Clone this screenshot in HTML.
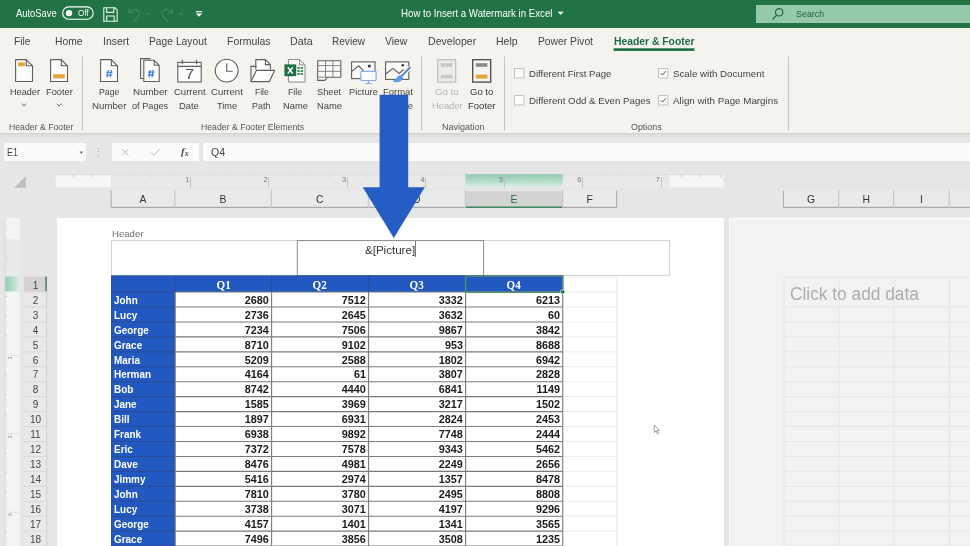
<!DOCTYPE html>
<html><head><meta charset="utf-8"><title>Excel</title><style>
html,body{margin:0;padding:0}
body{width:970px;height:546px;overflow:hidden;background:#e6e6e6;font-family:"Liberation Sans",sans-serif;position:relative}
#r{position:absolute;left:0;top:0;width:970px;height:546px;overflow:hidden;will-change:transform}
#r div,#r svg,#r span{position:absolute;display:block}
.t{white-space:nowrap;transform-origin:0 50%}
</style></head>
<body><div id="r">
<div style="left:0px;top:0px;width:970px;height:28px;background:#217346;"></div>
<span class="t" style="left:16.40px;top:7px;font-size:10.2px;line-height:14px;color:#ffffff;transform:scaleX(0.9188);">AutoSave</span>
<svg style="left:61px;top:5px" width="34" height="16" viewBox="0 0 34 16"><rect x="1.6" y="1.9" width="30.6" height="12.4" rx="6.2" fill="none" stroke="#fff" stroke-width="1.1"/><circle cx="8" cy="8.100" r="3.200" fill="#fff"/></svg>
<span class="t" style="left:78.40px;top:8px;font-size:8.2px;line-height:11px;color:#ffffff;transform:scaleX(1.0017);">Off</span>
<svg style="left:103px;top:7px" width="15" height="15" viewBox="0 0 15 15"><path d="M0.8 0.8h11.2l2.2 2.2v11.2H0.8z" fill="none" stroke="#e8f3ec" stroke-width="1.1"/><path d="M3.6 0.8v4.6h7.2V0.8M3.6 14.2V9h7.6v5.2" fill="none" stroke="#e8f3ec" stroke-width="1.1"/></svg>
<svg style="left:127px;top:6px" width="50" height="17" viewBox="0 0 50 17"><g fill="none" stroke="#408d64" stroke-width="1.1"><path d="M2.2 2.2v4.6h4.6"/><path d="M2.4 6.6c2.2-3.4 7.4-4 9.6-1.2 2.2 3-1.2 6-5.400 10.600"/><path d="M20 6.800l1.400 1.400 1.400-1.400"/><path d="M45.4 2.200v4.600h-4.600"/><path d="M45.200 6.600c-2.200-3.400-7.400-4-9.600-1.200-2.200 3 1.200 6 5.400 10.600"/></g></svg>
<svg style="left:177px;top:6px" width="12" height="17" viewBox="0 0 12 17"><path d="M2.6 6.800l1.400 1.400 1.400-1.400" fill="none" stroke="#408d64" stroke-width="1.1"/></svg>
<svg style="left:195px;top:10px" width="8" height="8" viewBox="0 0 8 8"><path d="M0.900 1.700h6.200" stroke="#fff" stroke-width="1.100"/><path d="M0.800 3.500h6.400l-3.200 3.300z" fill="#fff"/></svg>
<span class="t" style="left:401.00px;top:6px;font-size:10.4px;line-height:15px;color:#ffffff;transform:scaleX(0.9326);">How to Insert a Watermark in Excel</span>
<svg style="left:557px;top:10.5px" width="8" height="5" viewBox="0 0 8 5"><path d="M0.6 0.800h6l-3 3.200z" fill="#fff"/></svg>
<div style="left:756px;top:5px;width:214px;height:18px;background:#95c9ac;"></div>
<svg style="left:771px;top:6.5px" width="14" height="14" viewBox="0 0 14 14"><circle cx="8.200" cy="5.300" r="3.700" fill="none" stroke="#1f5c3c" stroke-width="1.1"/><path d="M5.600 8.100L1.600 12.300" stroke="#1f5c3c" stroke-width="1.200"/></svg>
<span class="t" style="left:796.00px;top:7px;font-size:9.6px;line-height:13px;color:#1f5c3c;transform:scaleX(0.9274);">Search</span>
<div style="left:0px;top:28px;width:970px;height:105px;background:#f4f3ee;"></div>
<div style="left:0px;top:133px;width:970px;height:5px;background:;background:linear-gradient(#d2d1d0,#e0e0e0 45%,#e6e6e6)"></div>
<span class="t" style="left:14.20px;top:34px;font-size:10.4px;line-height:15px;color:#444444;transform:scaleX(0.9791);">File</span>
<span class="t" style="left:55.00px;top:34px;font-size:10.4px;line-height:15px;color:#444444;transform:scaleX(0.9957);">Home</span>
<span class="t" style="left:103.00px;top:34px;font-size:10.4px;line-height:15px;color:#444444;transform:scaleX(1.0077);">Insert</span>
<span class="t" style="left:149.20px;top:34px;font-size:10.4px;line-height:15px;color:#444444;transform:scaleX(0.9904);">Page Layout</span>
<span class="t" style="left:227.00px;top:34px;font-size:10.4px;line-height:15px;color:#444444;transform:scaleX(1.0066);">Formulas</span>
<span class="t" style="left:290.00px;top:34px;font-size:10.4px;line-height:15px;color:#444444;transform:scaleX(1.0295);">Data</span>
<span class="t" style="left:332.00px;top:34px;font-size:10.4px;line-height:15px;color:#444444;transform:scaleX(0.9684);">Review</span>
<span class="t" style="left:384.50px;top:34px;font-size:10.4px;line-height:15px;color:#444444;transform:scaleX(0.9980);">View</span>
<span class="t" style="left:427.50px;top:34px;font-size:10.4px;line-height:15px;color:#444444;transform:scaleX(1.0195);">Developer</span>
<span class="t" style="left:495.80px;top:34px;font-size:10.4px;line-height:15px;color:#444444;transform:scaleX(1.0105);">Help</span>
<span class="t" style="left:538.40px;top:34px;font-size:10.4px;line-height:15px;color:#444444;transform:scaleX(0.9918);">Power Pivot</span>
<span class="t" style="left:613.50px;top:34px;font-size:10.4px;line-height:15px;color:#1e6e42;font-weight:700;transform:scaleX(0.9957);">Header &amp; Footer</span>
<svg style="left:613px;top:47px" width="83" height="5" viewBox="0 0 83 5"><rect x="0.500" y="1.300" width="81" height="2.600" fill="#1e6e42"/></svg>
<svg style="left:80.5px;top:56px" width="3" height="75" viewBox="0 0 3 75"><path d="M1.500 0.500V74.500" stroke="#c6c4c2" stroke-width="1"/></svg>
<svg style="left:420.1px;top:56px" width="3" height="75" viewBox="0 0 3 75"><path d="M1.500 0.500V74.500" stroke="#c6c4c2" stroke-width="1"/></svg>
<svg style="left:503.0px;top:56px" width="3" height="75" viewBox="0 0 3 75"><path d="M1.500 0.500V74.500" stroke="#c6c4c2" stroke-width="1"/></svg>
<svg style="left:787.2px;top:56px" width="3" height="75" viewBox="0 0 3 75"><path d="M1.500 0.500V74.500" stroke="#c6c4c2" stroke-width="1"/></svg>
<span class="t" style="left:8.50px;top:121px;font-size:9.3px;line-height:13px;color:#555555;transform:scaleX(0.9355);">Header &amp; Footer</span>
<span class="t" style="left:200.80px;top:121px;font-size:9.3px;line-height:13px;color:#555555;transform:scaleX(0.9357);">Header &amp; Footer Elements</span>
<span class="t" style="left:441.90px;top:121px;font-size:9.3px;line-height:13px;color:#555555;transform:scaleX(0.9696);">Navigation</span>
<span class="t" style="left:631.20px;top:121px;font-size:9.3px;line-height:13px;color:#555555;transform:scaleX(0.9549);">Options</span>
<span class="t" style="left:9.50px;top:85px;font-size:9.8px;line-height:14px;color:#444;transform:scaleX(0.9334);">Header</span>
<span class="t" style="left:45.60px;top:85px;font-size:9.8px;line-height:14px;color:#444;transform:scaleX(0.9461);">Footer</span>
<svg style="left:21.2px;top:103px" width="6" height="4" viewBox="0 0 6 4"><path d="M0.700 0.700l2.300 2.200 2.300-2.200" fill="none" stroke="#555" stroke-width="0.9"/></svg>
<svg style="left:56px;top:103px" width="6" height="4" viewBox="0 0 6 4"><path d="M0.700 0.700l2.300 2.200 2.300-2.200" fill="none" stroke="#555" stroke-width="0.9"/></svg>
<span class="t" style="left:99.00px;top:85px;font-size:9.8px;line-height:14px;color:#444;transform:scaleX(0.8868);">Page</span>
<span class="t" style="left:92.00px;top:99px;font-size:9.8px;line-height:14px;color:#444;transform:scaleX(0.9897);">Number</span>
<span class="t" style="left:132.80px;top:85px;font-size:9.8px;line-height:14px;color:#444;transform:scaleX(0.9926);">Number</span>
<span class="t" style="left:132.00px;top:99px;font-size:9.8px;line-height:14px;color:#444;transform:scaleX(0.9361);">of Pages</span>
<span class="t" style="left:173.60px;top:85px;font-size:9.8px;line-height:14px;color:#444;transform:scaleX(0.9703);">Current</span>
<span class="t" style="left:179.20px;top:99px;font-size:9.8px;line-height:14px;color:#444;transform:scaleX(0.9564);">Date</span>
<span class="t" style="left:210.70px;top:85px;font-size:9.8px;line-height:14px;color:#444;transform:scaleX(0.9733);">Current</span>
<span class="t" style="left:216.50px;top:99px;font-size:9.8px;line-height:14px;color:#444;transform:scaleX(0.9383);">Time</span>
<span class="t" style="left:254.70px;top:85px;font-size:9.8px;line-height:14px;color:#444;transform:scaleX(0.8673);">File</span>
<span class="t" style="left:252.40px;top:99px;font-size:9.8px;line-height:14px;color:#444;transform:scaleX(0.9129);">Path</span>
<span class="t" style="left:288.00px;top:85px;font-size:9.8px;line-height:14px;color:#444;transform:scaleX(0.8863);">File</span>
<span class="t" style="left:283.00px;top:99px;font-size:9.8px;line-height:14px;color:#444;transform:scaleX(0.9564);">Name</span>
<span class="t" style="left:316.90px;top:85px;font-size:9.8px;line-height:14px;color:#444;transform:scaleX(0.9411);">Sheet</span>
<span class="t" style="left:316.50px;top:99px;font-size:9.8px;line-height:14px;color:#444;transform:scaleX(0.9602);">Name</span>
<span class="t" style="left:348.70px;top:85px;font-size:9.8px;line-height:14px;color:#444;transform:scaleX(0.9443);">Picture</span>
<span class="t" style="left:383.00px;top:85px;font-size:9.8px;line-height:14px;color:#444;transform:scaleX(0.9668);">Format</span>
<span class="t" style="left:383.60px;top:99px;font-size:9.8px;line-height:14px;color:#444;transform:scaleX(0.9443);">Picture</span>
<span class="t" style="left:435.00px;top:85px;font-size:9.8px;line-height:14px;color:#b5b4b2;transform:scaleX(0.9888);">Go to</span>
<span class="t" style="left:431.80px;top:99px;font-size:9.8px;line-height:14px;color:#b5b4b2;transform:scaleX(0.9521);">Header</span>
<span class="t" style="left:469.70px;top:85px;font-size:9.8px;line-height:14px;color:#333;transform:scaleX(0.9721);">Go to</span>
<span class="t" style="left:467.70px;top:99px;font-size:9.8px;line-height:14px;color:#333;transform:scaleX(0.9708);">Footer</span>
<svg style="left:513.6px;top:67.5px" width="11" height="11" viewBox="0 0 11 11"><rect x="0.5" y="0.5" width="9.4" height="9.400" fill="#fdfdfd" stroke="#c4c3c1" stroke-width="1"/></svg>
<svg style="left:513.6px;top:94.6px" width="11" height="11" viewBox="0 0 11 11"><rect x="0.5" y="0.5" width="9.4" height="9.400" fill="#fdfdfd" stroke="#c4c3c1" stroke-width="1"/></svg>
<svg style="left:658.2px;top:67.5px" width="11" height="11" viewBox="0 0 11 11"><rect x="0.5" y="0.5" width="9.4" height="9.400" fill="#fdfdfd" stroke="#c4c3c1" stroke-width="1"/><path d="M2.600 5.200l1.900 1.900 3.300-3.900" fill="none" stroke="#555" stroke-width="1"/></svg>
<svg style="left:658.2px;top:94.6px" width="11" height="11" viewBox="0 0 11 11"><rect x="0.5" y="0.5" width="9.4" height="9.400" fill="#fdfdfd" stroke="#c4c3c1" stroke-width="1"/><path d="M2.600 5.200l1.900 1.900 3.300-3.900" fill="none" stroke="#555" stroke-width="1"/></svg>
<span class="t" style="left:529.00px;top:67px;font-size:9.8px;line-height:14px;color:#444;transform:scaleX(0.9784);">Different First Page</span>
<span class="t" style="left:529.00px;top:94px;font-size:9.8px;line-height:14px;color:#444;transform:scaleX(0.9886);">Different Odd &amp; Even Pages</span>
<span class="t" style="left:672.70px;top:67px;font-size:9.8px;line-height:14px;color:#444;transform:scaleX(0.9931);">Scale with Document</span>
<span class="t" style="left:672.70px;top:94px;font-size:9.8px;line-height:14px;color:#444;transform:scaleX(0.9999);">Align with Page Margins</span>
<svg style="left:14.5px;top:58.5px" width="19" height="24" viewBox="0 0 19 24"><path d="M0.600 0.600H11.3L17.5 6.8V22.5H0.600Z M11.3 0.600V6.8H17.5" fill="#fdfdfd" stroke="#605e5c" stroke-width="1.100" stroke-linejoin="round"/><rect x="3" y="3.300" width="7" height="4" fill="#e8a33d"/></svg>
<svg style="left:50px;top:58.5px" width="19" height="24" viewBox="0 0 19 24"><path d="M0.600 0.600H11.3L17.5 6.8V22.5H0.600Z M11.3 0.600V6.8H17.5" fill="#fdfdfd" stroke="#605e5c" stroke-width="1.100" stroke-linejoin="round"/><rect x="3.200" y="15.200" width="11.600" height="4.200" fill="#e8a33d"/></svg>
<svg style="left:99.5px;top:58.5px" width="19" height="24" viewBox="0 0 19 24"><path d="M0.600 0.600H11.3L17.5 6.8V22.5H0.600Z M11.3 0.600V6.8H17.5" fill="#fdfdfd" stroke="#605e5c" stroke-width="1.100" stroke-linejoin="round"/><g stroke="#3a78d6" stroke-width="1.100" fill="none"><path d="M6.200 13.200h6.400M5.800 16h6.400M8.400 11l-1.200 7.400M11.400 11l-1.200 7.400"/></g></svg>
<svg style="left:140.2px;top:58.2px" width="21" height="25" viewBox="0 0 21 25"><path d="M3.600 20.500H0.600V0.600H10.500" fill="none" stroke="#605e5c" stroke-width="1.100"/><g transform="translate(3.200 1.700)"><path d="M0.600 0.600H11.0L16.0 5.6V21.8H0.600Z M11.0 0.600V5.6H16.0" fill="#fdfdfd" stroke="#605e5c" stroke-width="1.100" stroke-linejoin="round"/><g stroke="#3a78d6" stroke-width="1.100" fill="none"><path d="M4.800 12.400h6.400M4.400 15.200h6.400M7 10.200l-1.200 7.400M10 10.200l-1.200 7.400"/></g></g></svg>
<svg style="left:176.5px;top:58.5px" width="26" height="25" viewBox="0 0 26 25"><rect x="0.800" y="3.400" width="23.400" height="19.600" fill="#fdfdfd" stroke="#605e5c" stroke-width="1.100"/><path d="M0.800 7.400h23.400M5.400 0.800v4.400M19.600 0.800v4.400" stroke="#605e5c" stroke-width="1.100"/></svg>
<span class="t" style="left:184.60px;top:63px;font-size:15.5px;line-height:22px;color:#555;transform:scaleX(1.0667);">7</span>
<svg style="left:213.5px;top:58px" width="26" height="26" viewBox="0 0 26 26"><circle cx="12.700" cy="12.600" r="11.400" fill="#fdfdfd" stroke="#605e5c" stroke-width="1.100"/><path d="M12.700 5.200v8h6" fill="none" stroke="#605e5c" stroke-width="1.100"/></svg>
<svg style="left:249.5px;top:58.5px" width="26" height="25" viewBox="0 0 26 25"><path d="M5.800 10.500V0.600h9.600l5 5v4.900M15.400 0.600v5h5" fill="#fdfdfd" stroke="#605e5c" stroke-width="1.100" stroke-linejoin="round"/><path d="M1 22.600V7.400h5.600" fill="none" stroke="#605e5c" stroke-width="1.100"/><path d="M1 22.600L6.400 11.400H24.600L19.400 22.600Z" fill="#fdfdfd" stroke="#605e5c" stroke-width="1.100" stroke-linejoin="round"/></svg>
<svg style="left:283.5px;top:58.5px" width="23" height="25" viewBox="0 0 23 25"><path d="M4.400 0.600H15.600L21 6V23H4.400Z M15.600 0.600V6H21" fill="#fdfdfd" stroke="#8a8886" stroke-width="1" stroke-linejoin="round"/><g fill="#3f9a68"><rect x="13.200" y="8" width="2.600" height="2"/><rect x="16.600" y="8" width="2.600" height="2"/><rect x="13.200" y="11" width="2.600" height="2"/><rect x="16.600" y="11" width="2.600" height="2"/><rect x="13.200" y="14" width="2.600" height="2"/><rect x="16.600" y="14" width="2.600" height="2"/></g><rect x="0.400" y="5.400" width="11.800" height="11.800" fill="#1d7044"/><path d="M3.800 8.200l5 6.400M8.800 8.200l-5 6.400" stroke="#fff" stroke-width="1.500"/></svg>
<svg style="left:316.8px;top:59.5px" width="26" height="23" viewBox="0 0 26 23"><path d="M0.700 0.700H23.800V17.200H10.200L7.900 20.400H0.700Z" fill="#fbfbfa" stroke="#605e5c" stroke-width="1.100" stroke-linejoin="round"/><path d="M0.700 5.600h23M0.700 11.300h23M8.500 0.700v16.500M15.900 0.700v16.500M0.700 17.200h9.500" fill="none" stroke="#7a7876" stroke-width="0.900"/></svg>
<svg style="left:351.2px;top:60.8px" width="27" height="24" viewBox="0 0 27 24"><rect x="0.600" y="0.900" width="23.400" height="16.700" fill="#fbfbfa" stroke="#605e5c" stroke-width="1.100"/><path d="M0.800 10.400l6.800-5.600 5.200 5.400" fill="none" stroke="#605e5c" stroke-width="1.100"/><circle cx="18.300" cy="5.100" r="1.500" fill="#333"/><rect x="9.900" y="10.300" width="15.200" height="9.200" rx="0.800" fill="#f8fbff" stroke="#7fb0f2" stroke-width="1.200"/><path d="M17.500 19.600v2.600M14.400 22.500h6.200" stroke="#7fb0f2" stroke-width="1.100"/></svg>
<svg style="left:385.4px;top:60.8px" width="27" height="24" viewBox="0 0 27 24"><rect x="0.600" y="0.900" width="23.200" height="17.500" fill="#fbfbfa" stroke="#605e5c" stroke-width="1.100"/><path d="M0.800 13l7.100-5.600 6.300 5.100 4.400-4" fill="none" stroke="#605e5c" stroke-width="1.100"/><circle cx="17.800" cy="4.200" r="1.300" fill="#333"/><path d="M24.900 6.600L15.300 16.400" stroke="#f4f3ee" stroke-width="4.200"/><path d="M24.900 6.600L15.300 16.400" stroke="#3f7fd6" stroke-width="1.700" stroke-linecap="round"/><path d="M15.800 14.400c-3.600-0.400-3.800 3.900-8.200 5.800 3.600 2.200 9.800 0.800 10.600-3.400z" fill="#5b9be8"/></svg>
<svg style="left:436.8px;top:58.5px" width="20" height="25" viewBox="0 0 20 25"><rect x="0.700" y="0.700" width="18" height="22.400" fill="#ebebea" stroke="#bdbcba" stroke-width="1.200"/><rect x="3.800" y="4.200" width="11.600" height="3.600" fill="#c9c8c6"/><rect x="3.800" y="15.800" width="11.600" height="3.600" fill="#c9c8c6"/></svg>
<svg style="left:471.6px;top:58.5px" width="20" height="25" viewBox="0 0 20 25"><rect x="0.700" y="0.700" width="18" height="22.400" fill="#f4f4f3" stroke="#4a4948" stroke-width="1.300"/><rect x="3.800" y="4.200" width="11.600" height="3.600" fill="#8a8988"/><rect x="3.800" y="15.600" width="11.600" height="4" fill="#e8a33d"/></svg>
<div style="left:4px;top:143px;width:82px;height:17.5px;background:#fbfbfb;"></div>
<span class="t" style="left:7.20px;top:145px;font-size:10.4px;line-height:15px;color:#444;transform:scaleX(0.8649);">E1</span>
<svg style="left:78.5px;top:150.5px" width="5" height="4" viewBox="0 0 5 4"><path d="M0.400 0.600h4l-2 2.300z" fill="#777"/></svg>
<div style="left:97.5px;top:147.5px;width:1px;height:1px;background:#a0a0a0;"></div>
<div style="left:97.5px;top:151px;width:1px;height:1px;background:#a0a0a0;"></div>
<div style="left:97.5px;top:154.5px;width:1px;height:1px;background:#a0a0a0;"></div>
<div style="left:112px;top:143px;width:87px;height:17.5px;background:#fbfbfb;"></div>
<svg style="left:121px;top:147.5px" width="9" height="9" viewBox="0 0 9 9"><path d="M1 1l6.500 6.500M7.500 1L1 7.500" stroke="#bdbdbd" stroke-width="1" fill="none"/></svg>
<svg style="left:150px;top:147.5px" width="11" height="9" viewBox="0 0 11 9"><path d="M1 4.700l2.800 2.800L9.500 1" stroke="#bdbdbd" stroke-width="1" fill="none"/></svg>
<span class="t" style="left:181.00px;top:144px;font-size:11px;line-height:15px;color:#505050;font-weight:700;font-family:'Liberation Serif',serif;font-style:italic;">f</span>
<span class="t" style="left:184.80px;top:148px;font-size:7.8px;line-height:11px;color:#505050;font-weight:700;font-family:'Liberation Serif',serif;font-style:italic;">x</span>
<div style="left:203px;top:143px;width:767px;height:17.5px;background:#fbfbfb;"></div>
<span class="t" style="left:211.30px;top:145px;font-size:10.4px;line-height:15px;color:#444;transform:scaleX(1.0090);">Q4</span>
<svg style="left:13px;top:175px" width="14" height="14" viewBox="0 0 14 14"><path d="M12.800 1.200V12.800H1.200Z" fill="#bdbdbd"/></svg>
<svg style="left:55px;top:173px" width="670" height="16" viewBox="0 0 670 16"><rect x="0.600" y="1.500" width="55.600" height="13" fill="#f6f6f6"/><rect x="56.200" y="1.500" width="558" height="13" fill="#e9e9e9"/><rect x="614.200" y="1.500" width="54.600" height="13" fill="#f6f6f6"/><path d="M0.600 1.700H668.800" stroke="#d9d9d9" stroke-width="0.800"/><defs><linearGradient id="rg" x1="0" y1="0" x2="0" y2="1"><stop offset="0" stop-color="#8dccae"/><stop offset="0.550" stop-color="#b7ddc9"/><stop offset="1" stop-color="#e0eee7"/></linearGradient></defs><rect x="410.400" y="1.300" width="97.200" height="13.200" fill="url(#rg)"/></svg>
<svg style="left:189.04px;top:176px" width="3" height="12" viewBox="0 0 3 12"><path d="M1.500 1.500V11.500" stroke="#c2c2c2" stroke-width="1"/></svg>
<span class="t" style="left:185.14px;top:175px;font-size:7.5px;line-height:10px;color:#7a7a7a;">1</span>
<svg style="left:267.48px;top:176px" width="3" height="12" viewBox="0 0 3 12"><path d="M1.500 1.500V11.500" stroke="#c2c2c2" stroke-width="1"/></svg>
<span class="t" style="left:263.58px;top:175px;font-size:7.5px;line-height:10px;color:#7a7a7a;">2</span>
<svg style="left:345.91999999999996px;top:176px" width="3" height="12" viewBox="0 0 3 12"><path d="M1.500 1.500V11.500" stroke="#c2c2c2" stroke-width="1"/></svg>
<span class="t" style="left:342.02px;top:175px;font-size:7.5px;line-height:10px;color:#7a7a7a;">3</span>
<svg style="left:424.36px;top:176px" width="3" height="12" viewBox="0 0 3 12"><path d="M1.500 1.500V11.500" stroke="#c2c2c2" stroke-width="1"/></svg>
<span class="t" style="left:420.46px;top:175px;font-size:7.5px;line-height:10px;color:#7a7a7a;">4</span>
<svg style="left:502.79999999999995px;top:176px" width="3" height="12" viewBox="0 0 3 12"><path d="M1.500 1.500V11.500" stroke="#c2c2c2" stroke-width="1"/></svg>
<span class="t" style="left:498.90px;top:175px;font-size:7.5px;line-height:10px;color:#7a7a7a;">5</span>
<svg style="left:581.24px;top:176px" width="3" height="12" viewBox="0 0 3 12"><path d="M1.500 1.500V11.500" stroke="#c2c2c2" stroke-width="1"/></svg>
<span class="t" style="left:577.34px;top:175px;font-size:7.5px;line-height:10px;color:#7a7a7a;">6</span>
<svg style="left:659.68px;top:176px" width="3" height="12" viewBox="0 0 3 12"><path d="M1.500 1.500V11.500" stroke="#c2c2c2" stroke-width="1"/></svg>
<span class="t" style="left:655.78px;top:175px;font-size:7.5px;line-height:10px;color:#7a7a7a;">7</span>
<div style="left:73px;top:175px;width:1px;height:2px;background:#cdcdcd;"></div>
<div style="left:92px;top:175px;width:1px;height:2px;background:#cdcdcd;"></div>
<div style="left:132px;top:175px;width:1px;height:2px;background:#cdcdcd;"></div>
<div style="left:151px;top:175px;width:1px;height:2px;background:#cdcdcd;"></div>
<div style="left:171px;top:175px;width:1px;height:2px;background:#cdcdcd;"></div>
<div style="left:210px;top:175px;width:1px;height:2px;background:#cdcdcd;"></div>
<div style="left:230px;top:175px;width:1px;height:2px;background:#cdcdcd;"></div>
<div style="left:249px;top:175px;width:1px;height:2px;background:#cdcdcd;"></div>
<div style="left:289px;top:175px;width:1px;height:2px;background:#cdcdcd;"></div>
<div style="left:308px;top:175px;width:1px;height:2px;background:#cdcdcd;"></div>
<div style="left:328px;top:175px;width:1px;height:2px;background:#cdcdcd;"></div>
<div style="left:367px;top:175px;width:1px;height:2px;background:#cdcdcd;"></div>
<div style="left:387px;top:175px;width:1px;height:2px;background:#cdcdcd;"></div>
<div style="left:406px;top:175px;width:1px;height:2px;background:#cdcdcd;"></div>
<div style="left:445px;top:175px;width:1px;height:2px;background:#cdcdcd;"></div>
<div style="left:465px;top:175px;width:1px;height:2px;background:#cdcdcd;"></div>
<div style="left:485px;top:175px;width:1px;height:2px;background:#cdcdcd;"></div>
<div style="left:524px;top:175px;width:1px;height:2px;background:#cdcdcd;"></div>
<div style="left:544px;top:175px;width:1px;height:2px;background:#cdcdcd;"></div>
<div style="left:563px;top:175px;width:1px;height:2px;background:#cdcdcd;"></div>
<div style="left:602px;top:175px;width:1px;height:2px;background:#cdcdcd;"></div>
<div style="left:622px;top:175px;width:1px;height:2px;background:#cdcdcd;"></div>
<div style="left:642px;top:175px;width:1px;height:2px;background:#cdcdcd;"></div>
<div style="left:681px;top:175px;width:1px;height:2px;background:#cdcdcd;"></div>
<div style="left:700px;top:175px;width:1px;height:2px;background:#cdcdcd;"></div>
<div style="left:720px;top:175px;width:1px;height:2px;background:#cdcdcd;"></div>
<svg style="left:0;top:0" width="970" height="546" viewBox="0 0 970 546"><rect x="111.2" y="190.500" width="505.40" height="17" fill="#eaeaea"/><rect x="465.4" y="191.200" width="97.20" height="16.300" fill="#d3d3d3"/><path d="M111.2 207.400H616.6" stroke="#aaaaaa" stroke-width="1.100"/><path d="M465.4 207.300H562.6" stroke="#3b8860" stroke-width="1.400"/><path d="M111.2 190.500V207.900" stroke="#b0b0b0" stroke-width="1.100"/><path d="M174.8 190.500V207.900" stroke="#c4c4c4" stroke-width="1.100"/><path d="M271.3 190.500V207.900" stroke="#c4c4c4" stroke-width="1.100"/><path d="M368.3 190.500V207.900" stroke="#c4c4c4" stroke-width="1.100"/><path d="M465.4 190.500V207.900" stroke="#c4c4c4" stroke-width="1.100"/><path d="M562.6 190.500V207.900" stroke="#c4c4c4" stroke-width="1.100"/><path d="M616.6 190.500V207.900" stroke="#b0b0b0" stroke-width="1.100"/><rect x="783.5" y="190.500" width="190" height="17" fill="#eaeaea"/><path d="M783.5 207.400H970" stroke="#aaaaaa" stroke-width="1.100"/><path d="M783.5 190.500V207.900" stroke="#b0b0b0" stroke-width="1.100"/><path d="M838.7 190.500V207.900" stroke="#c4c4c4" stroke-width="1.100"/><path d="M893.6 190.500V207.900" stroke="#c4c4c4" stroke-width="1.100"/><path d="M949.2 190.500V207.900" stroke="#c4c4c4" stroke-width="1.100"/></svg>
<span class="t" style="left:139.53px;top:192px;font-size:10.4px;line-height:15px;color:#333;">A</span>
<span class="t" style="left:219.58px;top:192px;font-size:10.4px;line-height:15px;color:#333;">B</span>
<span class="t" style="left:316.04px;top:192px;font-size:10.4px;line-height:15px;color:#333;">C</span>
<span class="t" style="left:413.09px;top:192px;font-size:10.4px;line-height:15px;color:#333;">D</span>
<span class="t" style="left:510.53px;top:192px;font-size:10.4px;line-height:15px;color:#1e6e42;">E</span>
<span class="t" style="left:586.42px;top:192px;font-size:10.4px;line-height:15px;color:#333;">F</span>
<span class="t" style="left:807.05px;top:192px;font-size:10.4px;line-height:15px;color:#333;">G</span>
<span class="t" style="left:862.39px;top:192px;font-size:10.4px;line-height:15px;color:#333;">H</span>
<span class="t" style="left:919.95px;top:192px;font-size:10.4px;line-height:15px;color:#333;">I</span>
<div style="left:57px;top:218px;width:667px;height:330px;background:#ffffff;"></div>
<svg style="left:726px;top:216px" width="244" height="330" viewBox="0 0 244 330"><rect x="1.900" y="1.700" width="244" height="330" fill="#dcdcdc"/><rect x="2.700" y="1.700" width="244" height="330" fill="#fafafa"/><rect x="4.200" y="3.200" width="244" height="330" fill="#f2f2f2"/></svg>
<svg style="left:0;top:0" width="24" height="546" viewBox="0 0 24 546"><rect x="4.800" y="217.600" width="15" height="22" fill="#f4f4f4"/><rect x="4.800" y="239.600" width="15" height="37" fill="#e9e9e9"/><defs><linearGradient id="vg" x1="0" y1="0" x2="1" y2="0"><stop offset="0" stop-color="#8dccae"/><stop offset="0.550" stop-color="#b7ddc9"/><stop offset="1" stop-color="#e0eee7"/></linearGradient></defs><rect x="4.800" y="276.600" width="15" height="15" fill="url(#vg)"/><rect x="4.800" y="291.600" width="15" height="260" fill="#f4f4f3"/><path d="M5.200 217.600V546" stroke="#d2d2d2" stroke-width="0.900"/><path d="M4.800 355.34H19.800" stroke="#e2e2e2" stroke-width="1"/><path d="M4.800 433.78H19.800" stroke="#e2e2e2" stroke-width="1"/><path d="M4.800 512.22H19.800" stroke="#e2e2e2" stroke-width="1"/><path d="M5 237.68H7.400" stroke="#d4d4d4" stroke-width="1"/><path d="M5 257.29H7.400" stroke="#d4d4d4" stroke-width="1"/><path d="M5 296.51H7.400" stroke="#d4d4d4" stroke-width="1"/><path d="M5 316.12H7.400" stroke="#d4d4d4" stroke-width="1"/><path d="M5 335.73H7.400" stroke="#d4d4d4" stroke-width="1"/><path d="M5 374.95H7.400" stroke="#d4d4d4" stroke-width="1"/><path d="M5 394.56H7.400" stroke="#d4d4d4" stroke-width="1"/><path d="M5 414.17H7.400" stroke="#d4d4d4" stroke-width="1"/><path d="M5 453.39H7.400" stroke="#d4d4d4" stroke-width="1"/><path d="M5 473.00H7.400" stroke="#d4d4d4" stroke-width="1"/><path d="M5 492.61H7.400" stroke="#d4d4d4" stroke-width="1"/><path d="M5 531.83H7.400" stroke="#d4d4d4" stroke-width="1"/></svg>
<span class="t" style="left:8.00px;top:354px;font-size:5.8px;line-height:8px;color:#8a8a8a;transform:rotate(-90deg);transform-origin:50% 50%;">1</span>
<span class="t" style="left:8.00px;top:433px;font-size:5.8px;line-height:8px;color:#8a8a8a;transform:rotate(-90deg);transform-origin:50% 50%;">2</span>
<span class="t" style="left:8.00px;top:511px;font-size:5.8px;line-height:8px;color:#8a8a8a;transform:rotate(-90deg);transform-origin:50% 50%;">3</span>
<svg style="left:0;top:0" width="60" height="546" viewBox="0 0 60 546"><rect x="24" y="291.55" width="23" height="260" fill="#e9e9e9"/><rect x="24" y="276.60" width="23" height="14.94" fill="#d3d3d3"/><rect x="45.200" y="276.60" width="1.800" height="14.94" fill="#5f8d76"/><rect x="24" y="291.55" width="23" height="1" fill="#d8d8d8"/><rect x="24" y="306.49" width="23" height="1" fill="#d8d8d8"/><rect x="24" y="321.44" width="23" height="1" fill="#d8d8d8"/><rect x="24" y="336.38" width="23" height="1" fill="#d8d8d8"/><rect x="24" y="351.33" width="23" height="1" fill="#d8d8d8"/><rect x="24" y="366.27" width="23" height="1" fill="#d8d8d8"/><rect x="24" y="381.22" width="23" height="1" fill="#d8d8d8"/><rect x="24" y="396.16" width="23" height="1" fill="#d8d8d8"/><rect x="24" y="411.11" width="23" height="1" fill="#d8d8d8"/><rect x="24" y="426.05" width="23" height="1" fill="#d8d8d8"/><rect x="24" y="441.00" width="23" height="1" fill="#d8d8d8"/><rect x="24" y="455.94" width="23" height="1" fill="#d8d8d8"/><rect x="24" y="470.88" width="23" height="1" fill="#d8d8d8"/><rect x="24" y="485.83" width="23" height="1" fill="#d8d8d8"/><rect x="24" y="500.78" width="23" height="1" fill="#d8d8d8"/><rect x="24" y="515.72" width="23" height="1" fill="#d8d8d8"/><rect x="24" y="530.66" width="23" height="1" fill="#d8d8d8"/><rect x="24" y="545.61" width="23" height="1" fill="#d8d8d8"/><rect x="46.200" y="291.55" width="1" height="260" fill="#d0d0d0"/></svg>
<span class="t" style="left:32.72px;top:279px;font-size:10px;line-height:14px;color:#444;">1</span>
<span class="t" style="left:32.72px;top:294px;font-size:10px;line-height:14px;color:#444;">2</span>
<span class="t" style="left:32.72px;top:309px;font-size:10px;line-height:14px;color:#444;">3</span>
<span class="t" style="left:32.72px;top:324px;font-size:10px;line-height:14px;color:#444;">4</span>
<span class="t" style="left:32.72px;top:339px;font-size:10px;line-height:14px;color:#444;">5</span>
<span class="t" style="left:32.72px;top:354px;font-size:10px;line-height:14px;color:#444;">6</span>
<span class="t" style="left:32.72px;top:368px;font-size:10px;line-height:14px;color:#444;">7</span>
<span class="t" style="left:32.72px;top:383px;font-size:10px;line-height:14px;color:#444;">8</span>
<span class="t" style="left:32.72px;top:398px;font-size:10px;line-height:14px;color:#444;">9</span>
<span class="t" style="left:29.94px;top:413px;font-size:10px;line-height:14px;color:#444;">10</span>
<span class="t" style="left:30.30px;top:428px;font-size:10px;line-height:14px;color:#444;">11</span>
<span class="t" style="left:29.94px;top:443px;font-size:10px;line-height:14px;color:#444;">12</span>
<span class="t" style="left:29.94px;top:458px;font-size:10px;line-height:14px;color:#444;">13</span>
<span class="t" style="left:29.94px;top:473px;font-size:10px;line-height:14px;color:#444;">14</span>
<span class="t" style="left:29.94px;top:488px;font-size:10px;line-height:14px;color:#444;">15</span>
<span class="t" style="left:29.94px;top:503px;font-size:10px;line-height:14px;color:#444;">16</span>
<span class="t" style="left:29.94px;top:518px;font-size:10px;line-height:14px;color:#444;">17</span>
<span class="t" style="left:29.94px;top:533px;font-size:10px;line-height:14px;color:#444;">18</span>
<span class="t" style="left:112.00px;top:227px;font-size:9.4px;line-height:13px;color:#707070;transform:scaleX(1.0244);">Header</span>
<svg style="left:0;top:0" width="970" height="546" viewBox="0 0 970 546"><rect x="111.600" y="240.600" width="558" height="34.800" fill="#fff" stroke="#d2d2d2" stroke-width="1"/><rect x="297.300" y="240.600" width="186.300" height="34.900" fill="#fff" stroke="#8c8c8c" stroke-width="1"/><rect x="563" y="276.60" width="54" height="1" fill="#ededed"/><rect x="563" y="291.55" width="54" height="1" fill="#ededed"/><rect x="563" y="306.49" width="54" height="1" fill="#ededed"/><rect x="563" y="321.44" width="54" height="1" fill="#ededed"/><rect x="563" y="336.38" width="54" height="1" fill="#ededed"/><rect x="563" y="351.33" width="54" height="1" fill="#ededed"/><rect x="563" y="366.27" width="54" height="1" fill="#ededed"/><rect x="563" y="381.22" width="54" height="1" fill="#ededed"/><rect x="563" y="396.16" width="54" height="1" fill="#ededed"/><rect x="563" y="411.11" width="54" height="1" fill="#ededed"/><rect x="563" y="426.05" width="54" height="1" fill="#ededed"/><rect x="563" y="441.00" width="54" height="1" fill="#ededed"/><rect x="563" y="455.94" width="54" height="1" fill="#ededed"/><rect x="563" y="470.88" width="54" height="1" fill="#ededed"/><rect x="563" y="485.83" width="54" height="1" fill="#ededed"/><rect x="563" y="500.78" width="54" height="1" fill="#ededed"/><rect x="563" y="515.72" width="54" height="1" fill="#ededed"/><rect x="563" y="530.66" width="54" height="1" fill="#ededed"/><rect x="563" y="545.61" width="54" height="1" fill="#ededed"/><rect x="616.300" y="276.60" width="1" height="270" fill="#e9e9e9"/><rect x="111.6" y="275.600" width="451.10" height="16.44" fill="#2259c0"/><rect x="111.6" y="291.55" width="63.60" height="260" fill="#2259c0"/><path d="M111.6 276.200H562.7" stroke="#2c52a2" stroke-width="1.200"/><path d="M175.2 292.05H562.7" stroke="#7a7a7a" stroke-width="1.100"/><path d="M111.6 292.05H175.2" stroke="#2a4c98" stroke-width="1.100"/><path d="M175.2 306.99H562.7" stroke="#7a7a7a" stroke-width="1.100"/><path d="M111.6 306.99H175.2" stroke="#2a4c98" stroke-width="1.100"/><path d="M175.2 321.94H562.7" stroke="#7a7a7a" stroke-width="1.100"/><path d="M111.6 321.94H175.2" stroke="#2a4c98" stroke-width="1.100"/><path d="M175.2 336.88H562.7" stroke="#7a7a7a" stroke-width="1.100"/><path d="M111.6 336.88H175.2" stroke="#2a4c98" stroke-width="1.100"/><path d="M175.2 351.83H562.7" stroke="#7a7a7a" stroke-width="1.100"/><path d="M111.6 351.83H175.2" stroke="#2a4c98" stroke-width="1.100"/><path d="M175.2 366.77H562.7" stroke="#7a7a7a" stroke-width="1.100"/><path d="M111.6 366.77H175.2" stroke="#2a4c98" stroke-width="1.100"/><path d="M175.2 381.72H562.7" stroke="#7a7a7a" stroke-width="1.100"/><path d="M111.6 381.72H175.2" stroke="#2a4c98" stroke-width="1.100"/><path d="M175.2 396.66H562.7" stroke="#7a7a7a" stroke-width="1.100"/><path d="M111.6 396.66H175.2" stroke="#2a4c98" stroke-width="1.100"/><path d="M175.2 411.61H562.7" stroke="#7a7a7a" stroke-width="1.100"/><path d="M111.6 411.61H175.2" stroke="#2a4c98" stroke-width="1.100"/><path d="M175.2 426.55H562.7" stroke="#7a7a7a" stroke-width="1.100"/><path d="M111.6 426.55H175.2" stroke="#2a4c98" stroke-width="1.100"/><path d="M175.2 441.50H562.7" stroke="#7a7a7a" stroke-width="1.100"/><path d="M111.6 441.50H175.2" stroke="#2a4c98" stroke-width="1.100"/><path d="M175.2 456.44H562.7" stroke="#7a7a7a" stroke-width="1.100"/><path d="M111.6 456.44H175.2" stroke="#2a4c98" stroke-width="1.100"/><path d="M175.2 471.38H562.7" stroke="#7a7a7a" stroke-width="1.100"/><path d="M111.6 471.38H175.2" stroke="#2a4c98" stroke-width="1.100"/><path d="M175.2 486.33H562.7" stroke="#7a7a7a" stroke-width="1.100"/><path d="M111.6 486.33H175.2" stroke="#2a4c98" stroke-width="1.100"/><path d="M175.2 501.28H562.7" stroke="#7a7a7a" stroke-width="1.100"/><path d="M111.6 501.28H175.2" stroke="#2a4c98" stroke-width="1.100"/><path d="M175.2 516.22H562.7" stroke="#7a7a7a" stroke-width="1.100"/><path d="M111.6 516.22H175.2" stroke="#2a4c98" stroke-width="1.100"/><path d="M175.2 531.16H562.7" stroke="#7a7a7a" stroke-width="1.100"/><path d="M111.6 531.16H175.2" stroke="#2a4c98" stroke-width="1.100"/><path d="M175.2 546.11H562.7" stroke="#7a7a7a" stroke-width="1.100"/><path d="M111.6 546.11H175.2" stroke="#2a4c98" stroke-width="1.100"/><path d="M111.6 291.55V546" stroke="#2a4c98" stroke-width="1.100"/><path d="M111.6 275.600V291.55" stroke="#2a4c98" stroke-width="1.100"/><path d="M175.2 291.55V546" stroke="#7a7a7a" stroke-width="1.100"/><path d="M175.2 275.600V291.55" stroke="#2a4c98" stroke-width="1.100"/><path d="M271.6 291.55V546" stroke="#7a7a7a" stroke-width="1.100"/><path d="M271.6 275.600V291.55" stroke="#2a4c98" stroke-width="1.100"/><path d="M368.6 291.55V546" stroke="#7a7a7a" stroke-width="1.100"/><path d="M368.6 275.600V291.55" stroke="#2a4c98" stroke-width="1.100"/><path d="M465.6 291.55V546" stroke="#7a7a7a" stroke-width="1.100"/><path d="M465.6 275.600V291.55" stroke="#2a4c98" stroke-width="1.100"/><path d="M562.7 291.55V546" stroke="#7a7a7a" stroke-width="1.100"/><path d="M562.7 275.600V291.55" stroke="#2a4c98" stroke-width="1.100"/><rect x="465.6" y="276.100" width="97.10" height="16.05" fill="none" stroke="#4b8f70" stroke-width="1.500"/><rect x="560.90" y="290.05" width="3.800" height="3.800" fill="#1e6e42" stroke="#fff" stroke-width="0.600"/></svg>
<span class="t" style="left:364.50px;top:242px;font-size:11.4px;line-height:16px;color:#333;transform:scaleX(1.0144);">&amp;[Picture]</span>
<div style="left:415px;top:241px;width:1px;height:16px;background:#777;"></div>
<span class="t" style="left:215.73px;top:277px;font-size:12px;line-height:17px;color:#fff;font-weight:700;font-family:'Liberation Serif',serif;transform:scaleX(0.9255);transform-origin:50% 50%;">Q1</span>
<span class="t" style="left:312.43px;top:277px;font-size:12px;line-height:17px;color:#fff;font-weight:700;font-family:'Liberation Serif',serif;transform:scaleX(0.9255);transform-origin:50% 50%;">Q2</span>
<span class="t" style="left:409.43px;top:277px;font-size:12px;line-height:17px;color:#fff;font-weight:700;font-family:'Liberation Serif',serif;transform:scaleX(0.9255);transform-origin:50% 50%;">Q3</span>
<span class="t" style="left:506.48px;top:277px;font-size:12px;line-height:17px;color:#fff;font-weight:700;font-family:'Liberation Serif',serif;transform:scaleX(0.9255);transform-origin:50% 50%;">Q4</span>
<span class="t" style="left:114.00px;top:293px;font-size:10.8px;line-height:15px;color:#fff;font-weight:700;transform:scaleX(0.92);">John</span>
<span class="t" style="left:244.87px;top:293px;font-size:10.8px;line-height:15px;color:#1a1a1a;font-weight:700;">2680</span>
<span class="t" style="left:341.87px;top:293px;font-size:10.8px;line-height:15px;color:#1a1a1a;font-weight:700;">7512</span>
<span class="t" style="left:438.87px;top:293px;font-size:10.8px;line-height:15px;color:#1a1a1a;font-weight:700;">3332</span>
<span class="t" style="left:535.97px;top:293px;font-size:10.8px;line-height:15px;color:#1a1a1a;font-weight:700;">6213</span>
<span class="t" style="left:114.00px;top:308px;font-size:10.8px;line-height:15px;color:#fff;font-weight:700;transform:scaleX(0.92);">Lucy</span>
<span class="t" style="left:244.87px;top:308px;font-size:10.8px;line-height:15px;color:#1a1a1a;font-weight:700;">2736</span>
<span class="t" style="left:341.87px;top:308px;font-size:10.8px;line-height:15px;color:#1a1a1a;font-weight:700;">2645</span>
<span class="t" style="left:438.87px;top:308px;font-size:10.8px;line-height:15px;color:#1a1a1a;font-weight:700;">3632</span>
<span class="t" style="left:547.98px;top:308px;font-size:10.8px;line-height:15px;color:#1a1a1a;font-weight:700;">60</span>
<span class="t" style="left:114.00px;top:323px;font-size:10.8px;line-height:15px;color:#fff;font-weight:700;transform:scaleX(0.92);">George</span>
<span class="t" style="left:244.87px;top:323px;font-size:10.8px;line-height:15px;color:#1a1a1a;font-weight:700;">7234</span>
<span class="t" style="left:341.87px;top:323px;font-size:10.8px;line-height:15px;color:#1a1a1a;font-weight:700;">7506</span>
<span class="t" style="left:438.87px;top:323px;font-size:10.8px;line-height:15px;color:#1a1a1a;font-weight:700;">9867</span>
<span class="t" style="left:535.97px;top:323px;font-size:10.8px;line-height:15px;color:#1a1a1a;font-weight:700;">3842</span>
<span class="t" style="left:114.00px;top:338px;font-size:10.8px;line-height:15px;color:#fff;font-weight:700;transform:scaleX(0.92);">Grace</span>
<span class="t" style="left:244.87px;top:338px;font-size:10.8px;line-height:15px;color:#1a1a1a;font-weight:700;">8710</span>
<span class="t" style="left:341.87px;top:338px;font-size:10.8px;line-height:15px;color:#1a1a1a;font-weight:700;">9102</span>
<span class="t" style="left:444.88px;top:338px;font-size:10.8px;line-height:15px;color:#1a1a1a;font-weight:700;">953</span>
<span class="t" style="left:535.97px;top:338px;font-size:10.8px;line-height:15px;color:#1a1a1a;font-weight:700;">8688</span>
<span class="t" style="left:114.00px;top:353px;font-size:10.8px;line-height:15px;color:#fff;font-weight:700;transform:scaleX(0.92);">Maria</span>
<span class="t" style="left:244.87px;top:353px;font-size:10.8px;line-height:15px;color:#1a1a1a;font-weight:700;">5209</span>
<span class="t" style="left:341.87px;top:353px;font-size:10.8px;line-height:15px;color:#1a1a1a;font-weight:700;">2588</span>
<span class="t" style="left:438.87px;top:353px;font-size:10.8px;line-height:15px;color:#1a1a1a;font-weight:700;">1802</span>
<span class="t" style="left:535.97px;top:353px;font-size:10.8px;line-height:15px;color:#1a1a1a;font-weight:700;">6942</span>
<span class="t" style="left:114.00px;top:367px;font-size:10.8px;line-height:15px;color:#fff;font-weight:700;transform:scaleX(0.92);">Herman</span>
<span class="t" style="left:244.87px;top:367px;font-size:10.8px;line-height:15px;color:#1a1a1a;font-weight:700;">4164</span>
<span class="t" style="left:353.88px;top:367px;font-size:10.8px;line-height:15px;color:#1a1a1a;font-weight:700;">61</span>
<span class="t" style="left:438.87px;top:367px;font-size:10.8px;line-height:15px;color:#1a1a1a;font-weight:700;">3807</span>
<span class="t" style="left:535.97px;top:367px;font-size:10.8px;line-height:15px;color:#1a1a1a;font-weight:700;">2828</span>
<span class="t" style="left:114.00px;top:382px;font-size:10.8px;line-height:15px;color:#fff;font-weight:700;transform:scaleX(0.92);">Bob</span>
<span class="t" style="left:244.87px;top:382px;font-size:10.8px;line-height:15px;color:#1a1a1a;font-weight:700;">8742</span>
<span class="t" style="left:341.87px;top:382px;font-size:10.8px;line-height:15px;color:#1a1a1a;font-weight:700;">4440</span>
<span class="t" style="left:438.87px;top:382px;font-size:10.8px;line-height:15px;color:#1a1a1a;font-weight:700;">6841</span>
<span class="t" style="left:536.56px;top:382px;font-size:10.8px;line-height:15px;color:#1a1a1a;font-weight:700;">1149</span>
<span class="t" style="left:114.00px;top:397px;font-size:10.8px;line-height:15px;color:#fff;font-weight:700;transform:scaleX(0.92);">Jane</span>
<span class="t" style="left:244.87px;top:397px;font-size:10.8px;line-height:15px;color:#1a1a1a;font-weight:700;">1585</span>
<span class="t" style="left:341.87px;top:397px;font-size:10.8px;line-height:15px;color:#1a1a1a;font-weight:700;">3969</span>
<span class="t" style="left:438.87px;top:397px;font-size:10.8px;line-height:15px;color:#1a1a1a;font-weight:700;">3217</span>
<span class="t" style="left:535.97px;top:397px;font-size:10.8px;line-height:15px;color:#1a1a1a;font-weight:700;">1502</span>
<span class="t" style="left:114.00px;top:412px;font-size:10.8px;line-height:15px;color:#fff;font-weight:700;transform:scaleX(0.92);">Bill</span>
<span class="t" style="left:244.87px;top:412px;font-size:10.8px;line-height:15px;color:#1a1a1a;font-weight:700;">1897</span>
<span class="t" style="left:341.87px;top:412px;font-size:10.8px;line-height:15px;color:#1a1a1a;font-weight:700;">6931</span>
<span class="t" style="left:438.87px;top:412px;font-size:10.8px;line-height:15px;color:#1a1a1a;font-weight:700;">2824</span>
<span class="t" style="left:535.97px;top:412px;font-size:10.8px;line-height:15px;color:#1a1a1a;font-weight:700;">2453</span>
<span class="t" style="left:114.00px;top:427px;font-size:10.8px;line-height:15px;color:#fff;font-weight:700;transform:scaleX(0.92);">Frank</span>
<span class="t" style="left:244.87px;top:427px;font-size:10.8px;line-height:15px;color:#1a1a1a;font-weight:700;">6938</span>
<span class="t" style="left:341.87px;top:427px;font-size:10.8px;line-height:15px;color:#1a1a1a;font-weight:700;">9892</span>
<span class="t" style="left:438.87px;top:427px;font-size:10.8px;line-height:15px;color:#1a1a1a;font-weight:700;">7748</span>
<span class="t" style="left:535.97px;top:427px;font-size:10.8px;line-height:15px;color:#1a1a1a;font-weight:700;">2444</span>
<span class="t" style="left:114.00px;top:442px;font-size:10.8px;line-height:15px;color:#fff;font-weight:700;transform:scaleX(0.92);">Eric</span>
<span class="t" style="left:244.87px;top:442px;font-size:10.8px;line-height:15px;color:#1a1a1a;font-weight:700;">7372</span>
<span class="t" style="left:341.87px;top:442px;font-size:10.8px;line-height:15px;color:#1a1a1a;font-weight:700;">7578</span>
<span class="t" style="left:438.87px;top:442px;font-size:10.8px;line-height:15px;color:#1a1a1a;font-weight:700;">9343</span>
<span class="t" style="left:535.97px;top:442px;font-size:10.8px;line-height:15px;color:#1a1a1a;font-weight:700;">5462</span>
<span class="t" style="left:114.00px;top:457px;font-size:10.8px;line-height:15px;color:#fff;font-weight:700;transform:scaleX(0.92);">Dave</span>
<span class="t" style="left:244.87px;top:457px;font-size:10.8px;line-height:15px;color:#1a1a1a;font-weight:700;">8476</span>
<span class="t" style="left:341.87px;top:457px;font-size:10.8px;line-height:15px;color:#1a1a1a;font-weight:700;">4981</span>
<span class="t" style="left:438.87px;top:457px;font-size:10.8px;line-height:15px;color:#1a1a1a;font-weight:700;">2249</span>
<span class="t" style="left:535.97px;top:457px;font-size:10.8px;line-height:15px;color:#1a1a1a;font-weight:700;">2656</span>
<span class="t" style="left:114.00px;top:472px;font-size:10.8px;line-height:15px;color:#fff;font-weight:700;transform:scaleX(0.92);">Jimmy</span>
<span class="t" style="left:244.87px;top:472px;font-size:10.8px;line-height:15px;color:#1a1a1a;font-weight:700;">5416</span>
<span class="t" style="left:341.87px;top:472px;font-size:10.8px;line-height:15px;color:#1a1a1a;font-weight:700;">2974</span>
<span class="t" style="left:438.87px;top:472px;font-size:10.8px;line-height:15px;color:#1a1a1a;font-weight:700;">1357</span>
<span class="t" style="left:535.97px;top:472px;font-size:10.8px;line-height:15px;color:#1a1a1a;font-weight:700;">8478</span>
<span class="t" style="left:114.00px;top:487px;font-size:10.8px;line-height:15px;color:#fff;font-weight:700;transform:scaleX(0.92);">John</span>
<span class="t" style="left:244.87px;top:487px;font-size:10.8px;line-height:15px;color:#1a1a1a;font-weight:700;">7810</span>
<span class="t" style="left:341.87px;top:487px;font-size:10.8px;line-height:15px;color:#1a1a1a;font-weight:700;">3780</span>
<span class="t" style="left:438.87px;top:487px;font-size:10.8px;line-height:15px;color:#1a1a1a;font-weight:700;">2495</span>
<span class="t" style="left:535.97px;top:487px;font-size:10.8px;line-height:15px;color:#1a1a1a;font-weight:700;">8808</span>
<span class="t" style="left:114.00px;top:502px;font-size:10.8px;line-height:15px;color:#fff;font-weight:700;transform:scaleX(0.92);">Lucy</span>
<span class="t" style="left:244.87px;top:502px;font-size:10.8px;line-height:15px;color:#1a1a1a;font-weight:700;">3738</span>
<span class="t" style="left:341.87px;top:502px;font-size:10.8px;line-height:15px;color:#1a1a1a;font-weight:700;">3071</span>
<span class="t" style="left:438.87px;top:502px;font-size:10.8px;line-height:15px;color:#1a1a1a;font-weight:700;">4197</span>
<span class="t" style="left:535.97px;top:502px;font-size:10.8px;line-height:15px;color:#1a1a1a;font-weight:700;">9296</span>
<span class="t" style="left:114.00px;top:517px;font-size:10.8px;line-height:15px;color:#fff;font-weight:700;transform:scaleX(0.92);">George</span>
<span class="t" style="left:244.87px;top:517px;font-size:10.8px;line-height:15px;color:#1a1a1a;font-weight:700;">4157</span>
<span class="t" style="left:341.87px;top:517px;font-size:10.8px;line-height:15px;color:#1a1a1a;font-weight:700;">1401</span>
<span class="t" style="left:438.87px;top:517px;font-size:10.8px;line-height:15px;color:#1a1a1a;font-weight:700;">1341</span>
<span class="t" style="left:535.97px;top:517px;font-size:10.8px;line-height:15px;color:#1a1a1a;font-weight:700;">3565</span>
<span class="t" style="left:114.00px;top:532px;font-size:10.8px;line-height:15px;color:#fff;font-weight:700;transform:scaleX(0.92);">Grace</span>
<span class="t" style="left:244.87px;top:532px;font-size:10.8px;line-height:15px;color:#1a1a1a;font-weight:700;">7496</span>
<span class="t" style="left:341.87px;top:532px;font-size:10.8px;line-height:15px;color:#1a1a1a;font-weight:700;">3856</span>
<span class="t" style="left:438.87px;top:532px;font-size:10.8px;line-height:15px;color:#1a1a1a;font-weight:700;">3508</span>
<span class="t" style="left:535.97px;top:532px;font-size:10.8px;line-height:15px;color:#1a1a1a;font-weight:700;">1235</span>
<svg style="left:0;top:0" width="970" height="546" viewBox="0 0 970 546"><rect x="783.500" y="276.60" width="187" height="1" fill="#e5e5e5"/><rect x="783.500" y="306.49" width="187" height="1" fill="#e5e5e5"/><rect x="783.500" y="321.44" width="187" height="1" fill="#e5e5e5"/><rect x="783.500" y="336.38" width="187" height="1" fill="#e5e5e5"/><rect x="783.500" y="351.33" width="187" height="1" fill="#e5e5e5"/><rect x="783.500" y="366.27" width="187" height="1" fill="#e5e5e5"/><rect x="783.500" y="381.22" width="187" height="1" fill="#e5e5e5"/><rect x="783.500" y="396.16" width="187" height="1" fill="#e5e5e5"/><rect x="783.500" y="411.11" width="187" height="1" fill="#e5e5e5"/><rect x="783.500" y="426.05" width="187" height="1" fill="#e5e5e5"/><rect x="783.500" y="441.00" width="187" height="1" fill="#e5e5e5"/><rect x="783.500" y="455.94" width="187" height="1" fill="#e5e5e5"/><rect x="783.500" y="470.88" width="187" height="1" fill="#e5e5e5"/><rect x="783.500" y="485.83" width="187" height="1" fill="#e5e5e5"/><rect x="783.500" y="500.78" width="187" height="1" fill="#e5e5e5"/><rect x="783.500" y="515.72" width="187" height="1" fill="#e5e5e5"/><rect x="783.500" y="530.66" width="187" height="1" fill="#e5e5e5"/><rect x="783.500" y="545.61" width="187" height="1" fill="#e5e5e5"/><rect x="783.5" y="276.60" width="1" height="270" fill="#e5e5e5"/><rect x="838.7" y="276.60" width="1" height="270" fill="#e5e5e5"/><rect x="893.5" y="276.60" width="1" height="270" fill="#e5e5e5"/><rect x="949" y="276.60" width="1" height="270" fill="#e5e5e5"/></svg>
<span class="t" style="left:789.60px;top:282px;font-size:17.6px;line-height:25px;color:#adadad;transform:scaleX(0.9835);">Click to add data</span>
<svg style="left:360px;top:90px" width="70" height="152" viewBox="360 90 70 152"><path d="M379.600 94.800H408.200V187.300H424.800L393.800 238L362.800 187.300H379.600Z" fill="#245ec4"/></svg>
<svg style="left:653.4px;top:423.6px" width="9" height="13" viewBox="0 0 9 13"><path d="M1.200 1.200v7.400l1.900-1.700 1.300 2.900 1.100-0.500-1.300-2.900h2.400z" fill="#fff" stroke="#7c7c7c" stroke-width="0.750"/></svg>
</div></body></html>
